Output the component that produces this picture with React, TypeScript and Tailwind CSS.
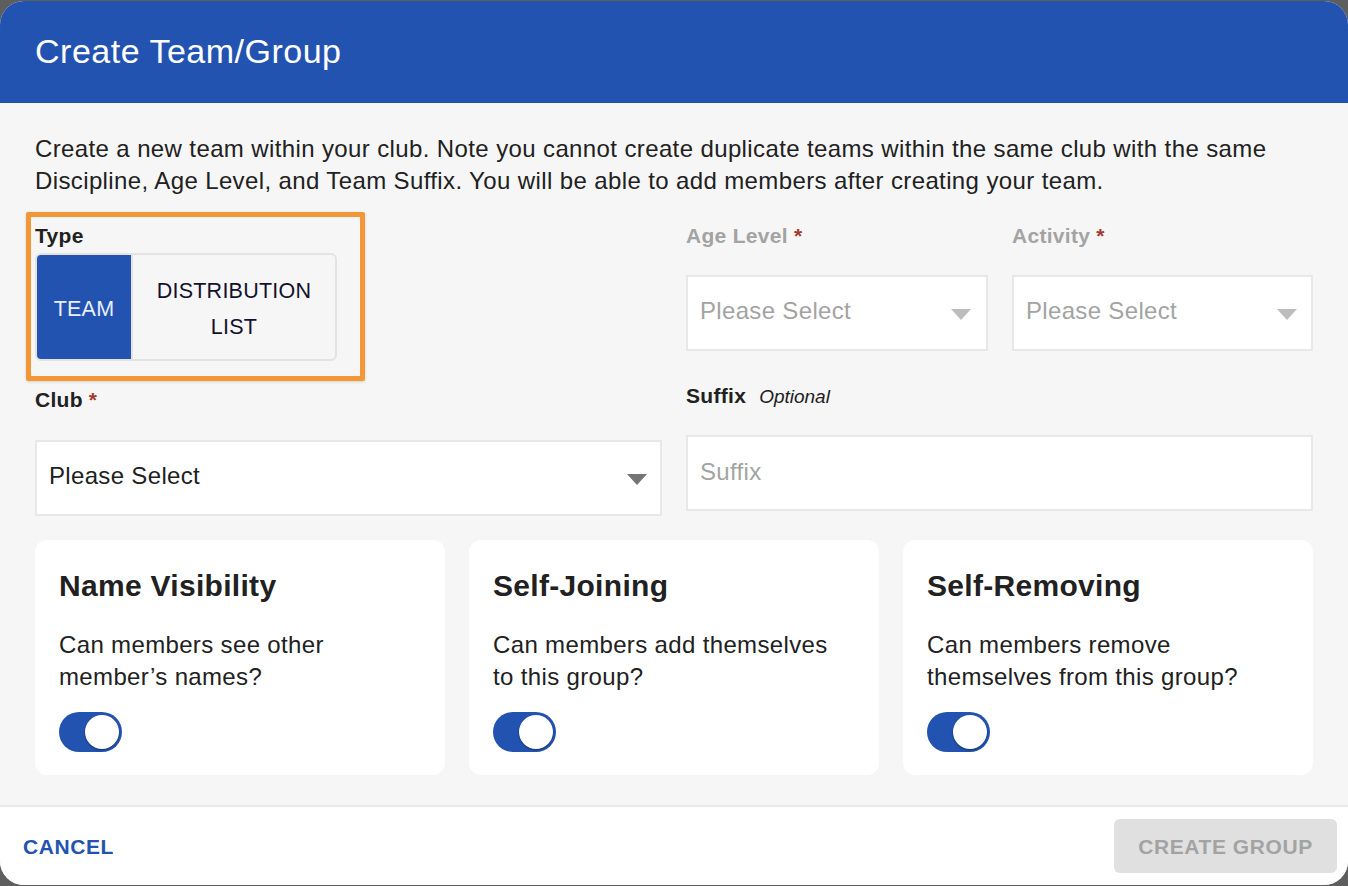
const font = { fontFamily: '"Liberation Sans", Arial, sans-serif' };

function Required() {
  return <span className="ml-[6px] text-[#a33a2c]">*</span>;
}

function Caret({ disabled }: { disabled?: boolean }) {
  return (
    <svg width="20" height="11" viewBox="0 0 20 11" className="mt-[2px] shrink-0">
      <path d="M0 0H20L10 11Z" fill={disabled ? "#bdbdbd" : "#757575"} />
    </svg>
  );
}

function SelectBox({ disabled, className }: { disabled?: boolean; className: string }) {
  return (
    <div
      className={`flex h-[76px] items-center justify-between border-2 border-[#e8e8e8] bg-white pl-3 ${className}`}
    >
      <span className={`mb-1 text-[24px] tracking-[0.33px] ${disabled ? "text-[#a3a3a3]" : "text-[#212121]"}`}>
        Please Select
      </span>
      <Caret disabled={disabled} />
    </div>
  );
}

function OptionCard({ title, lines }: { title: string; lines: string[] }) {
  return (
    <div className="flex h-[235px] flex-col rounded-[12px] bg-white px-6 pt-7">
      <div className="text-[30px] font-bold leading-9 tracking-[0.3px] text-[#212121]">{title}</div>
      <div className="mt-[25px] text-[24px] leading-8 tracking-[0.35px] text-[#212121]">
        {lines.map((l) => (
          <div key={l}>{l}</div>
        ))}
      </div>
      <div className="relative mt-[19px] h-10 w-[63px] rounded-full bg-[#2253b0]">
        <div className="absolute right-[3px] top-[3px] size-[34px] rounded-full bg-white shadow-[0_1px_2px_rgba(0,0,0,0.4)]" />
      </div>
    </div>
  );
}

export default function App() {
  return (
    <div className="h-[886px] w-[1348px] overflow-hidden bg-[#5e5e5e] py-px" style={font}>
      <div className="flex h-[884px] flex-col overflow-hidden rounded-[24px] bg-white">
        <header className="flex h-[102px] shrink-0 items-center bg-[#2253b0] px-[35px] pb-px">
          <h1 className="text-[34px] tracking-[0.5px] text-white">Create Team/Group</h1>
        </header>

        <main className="h-[704px] shrink-0 border-b-2 border-[#e8e8e8] bg-[#f6f6f6] px-[35px] pt-[30px]">
          <p className="text-[24px] leading-8 tracking-[0.38px] text-[#212121]">
            Create a new team within your club. Note you cannot create duplicate teams within the same club with the same
            <br />
            Discipline, Age Level, and Team Suffix. You will be able to add members after creating your team.
          </p>

          <div className="mt-[25px] grid h-[288px] grid-cols-[627px_627px] gap-x-6">
            <div className="relative">
              <div className="absolute -left-[9px] -top-[10px] h-[169px] w-[339px] rounded-[2px] border-[5px] border-[#f39636] shadow-[0_1px_3px_rgba(0,0,0,0.15)]" />
              <div className="text-[21px] font-bold leading-7 tracking-[0.3px] text-[#212121]">Type</div>
              <div className="mt-[3px] flex h-[108px] w-[302px] overflow-hidden rounded-[6px] border-2 border-[#e3e3e3] text-[21.5px] tracking-[0.25px]">
                <div className="flex w-[94px] items-center justify-center bg-[#2253b0] pt-1 text-[#e8eefa]">TEAM</div>
                <div className="flex flex-1 items-center justify-center border-l-2 border-[#e3e3e3] pt-1 text-center leading-9 text-[#12122e]">
                  DISTRIBUTION
                  <br />
                  LIST
                </div>
              </div>
              <div className="mt-[25px] text-[21px] font-bold leading-7 tracking-[0.3px] text-[#212121]">
                Club
                <Required />
              </div>
              <SelectBox className="mt-[26px] pr-[13px]" />
            </div>

            <div>
              <div className="grid grid-cols-[302px_301px] gap-x-6">
                <div>
                  <div className="text-[21px] font-bold leading-7 tracking-[0.3px] text-[#a3a3a3]">
                    Age Level
                    <Required />
                  </div>
                  <SelectBox disabled className="mt-[25px] pr-[15px]" />
                </div>
                <div>
                  <div className="text-[21px] font-bold leading-7 tracking-[0.3px] text-[#a3a3a3]">
                    Activity
                    <Required />
                  </div>
                  <SelectBox disabled className="mt-[25px] pr-[14px]" />
                </div>
              </div>
              <div className="mt-[31px] flex items-baseline gap-[13px] text-[#212121]">
                <span className="text-[21px] font-bold leading-7 tracking-[0.3px]">Suffix</span>
                <span className="text-[19px] italic leading-7">Optional</span>
              </div>
              <div className="mt-6 flex h-[76px] items-center border-2 border-[#e8e8e8] bg-white pb-[2px] pl-3 text-[24px] tracking-[0.33px] text-[#a3a3a3]">
                Suffix
              </div>
            </div>
          </div>

          <div className="mt-[30px] grid w-[1278px] grid-cols-3 gap-x-6">
            <OptionCard title="Name Visibility" lines={["Can members see other", "member’s names?"]} />
            <OptionCard title="Self-Joining" lines={["Can members add themselves", "to this group?"]} />
            <OptionCard title="Self-Removing" lines={["Can members remove", "themselves from this group?"]} />
          </div>
        </main>

        <footer className="flex flex-1 items-center justify-between bg-white pl-[23px] pr-[11px]">
          <span className="pt-px text-[21px] font-bold tracking-[0.57px] text-[#2253b0]">CANCEL</span>
          <div className="flex h-[54px] w-[223px] items-center justify-center rounded-[6px] bg-[#e0e0e0] pt-px text-[21px] font-bold tracking-[0.57px] text-[#a3a3a3]">
            CREATE GROUP
          </div>
        </footer>
      </div>
    </div>
  );
}
